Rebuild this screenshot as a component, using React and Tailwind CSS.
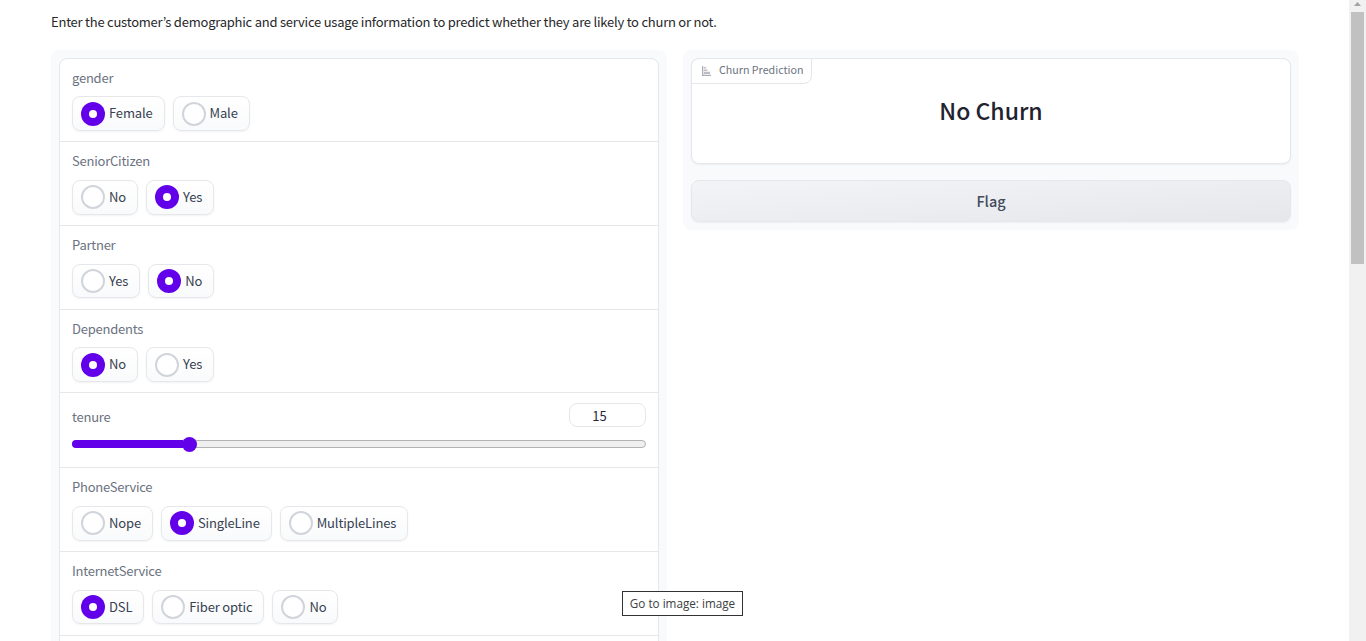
const FONT = { fontFamily: '"Noto Sans CJK KR", "Noto Sans", sans-serif' }

const radioRows = [
  { label: 'gender', options: ['Female', 'Male'], selected: 'Female' },
  { label: 'SeniorCitizen', options: ['No', 'Yes'], selected: 'Yes' },
  { label: 'Partner', options: ['Yes', 'No'], selected: 'No' },
  { label: 'Dependents', options: ['No', 'Yes'], selected: 'No' },
]

const lowerRows = [
  { label: 'PhoneService', options: ['Nope', 'SingleLine', 'MultipleLines'], selected: 'SingleLine' },
  { label: 'InternetService', options: ['DSL', 'Fiber optic', 'No'], selected: 'DSL' },
]

function RadioOption({ text, checked }) {
  return (
    <label className="flex h-[34.67px] items-center gap-1 rounded-lg border border-[#e5e7eb] bg-gradient-to-b from-white to-[#f9fafb] pl-2 pr-[11px] text-[13px] tracking-[-0.15px] text-[#374151] shadow-[0_1px_2px_rgba(0,0,0,0.05)]">
      {checked ? (
        <span className="flex h-6 w-6 items-center justify-center rounded-full bg-[#6200ea]">
          <span className="h-2 w-2 rounded-full bg-white" />
        </span>
      ) : (
        <span className="h-6 w-6 rounded-full border-2 border-[#d1d5db] bg-white" />
      )}
      <span className="pb-px">{text}</span>
    </label>
  )
}

function RadioRow({ label, options, selected }) {
  return (
    <div className="border-b border-[#e5e7eb] px-3 pt-3 pb-[10.4px]">
      <div className="h-[25.6px] text-[13px] leading-[13px] tracking-[-0.23px] text-[#6b7280]">{label}</div>
      <div className="flex gap-2">
        {options.map((o) => (
          <RadioOption key={o} text={o} checked={o === selected} />
        ))}
      </div>
    </div>
  )
}

function TenureRow() {
  return (
    <div className="h-[75px] border-b border-[#e5e7eb] px-3 pt-[10px]">
      <div className="flex items-center justify-between">
        <span className="pt-[2px] text-[13px] tracking-[-0.23px] text-[#6b7280]">tenure</span>
        <div className="flex h-6 w-[77px] items-center justify-center rounded-lg border border-[#e5e7eb] bg-white pr-4 text-[13px] text-[#1f2937]">
          15
        </div>
      </div>
      <div className="mt-[13px] flex h-2 items-center rounded-full border border-[#b2b2b2] bg-[#efefef]">
        <div className="-ml-px h-2 w-[111px] rounded-l-full bg-[#6200ea]" />
        <div className="-ml-px h-[15px] w-[15px] rounded-full bg-[#6200ea]" />
      </div>
    </div>
  )
}

function ChartIcon() {
  return (
    <svg className="h-[10px] w-[9px] text-[#a9adb5]" viewBox="0 0 9 10" fill="currentColor">
      <path d="M0 0h1.2v8.8H9V10H0z" />
      <path d="M1.8 1h2.4v1.6H1.8zM1.8 3.4h3.6V5H1.8zM1.8 5.8h6.2v2.2H1.8z" opacity="0.8" />
    </svg>
  )
}

function Scrollbar() {
  return (
    <div className="flex w-[17px] shrink-0 flex-col items-center bg-[#f1f1f1]">
      <svg className="mt-[2px] h-[4px] w-[7px] text-[#a3a3a3]" viewBox="0 0 7 4" fill="currentColor">
        <path d="M3.5 0L7 4H0z" />
      </svg>
      <div className="mt-[6px] h-[252px] w-[13px] bg-[#c1c1c1]" />
    </div>
  )
}

export default function App() {
  return (
    <div className="relative flex h-screen overflow-hidden bg-white" style={FONT}>
      <main className="min-w-0 flex-1 pl-[51px] pr-[50px]">
        <p className="flex h-[50px] items-start pt-3 text-[13px] leading-[19px] tracking-[-0.23px] text-[#27272a]">
          Enter the customer’s demographic and service usage information to predict whether they are likely to churn or not.
        </p>
        <div className="flex items-start gap-4">
          {/* Inputs column, runs past the bottom of the window */}
          <div className="flex-1 rounded-lg bg-[#f9fafb] p-2">
            <div className="rounded-lg border border-[#e5e7eb] bg-white">
              <div className="-mt-[0.3px]">
                {radioRows.map((r) => (
                  <RadioRow key={r.label} {...r} />
                ))}
                <TenureRow />
                {lowerRows.map((r) => (
                  <RadioRow key={r.label} {...r} />
                ))}
                <div className="h-[84px]" />
              </div>
            </div>
          </div>

          {/* Output column */}
          <div className="flex flex-1 flex-col gap-4 rounded-lg bg-[#f9fafb] p-2">
            <div className="h-[106px] rounded-lg border border-[#e5e7eb] bg-white shadow-[0_1px_2px_rgba(0,0,0,0.05)]">
              <div className="flex h-[26px] w-[121px] -translate-x-px -translate-y-px items-center gap-2 rounded-tl-lg rounded-br-lg border border-[#e5e7eb] bg-white pl-[10px] text-[10.7px] whitespace-nowrap text-[#6b7280]">
                <ChartIcon />
                <span className="pb-px">Churn Prediction</span>
              </div>
              <div className="pt-[7px] text-center text-[23px] leading-[36px] font-medium text-[#222230]">No Churn</div>
            </div>
            <button className="h-[42px] rounded-lg border border-[#e5e7eb] bg-gradient-to-br from-[#f3f4f6] to-[#e5e7eb] text-[14.5px] font-medium text-[#434b5c] shadow-[0_1px_2px_rgba(0,0,0,0.05)]">
              Flag
            </button>
          </div>
        </div>
      </main>
      <Scrollbar />
      <div className="absolute top-[591px] left-[622px] flex h-[25px] w-[121px] items-center justify-center border border-[#333333] bg-white text-[11.7px] text-[#3c4043]" style={{ fontFamily: '"Open Sans", sans-serif' }}>
        Go to image: image
      </div>
    </div>
  )
}
